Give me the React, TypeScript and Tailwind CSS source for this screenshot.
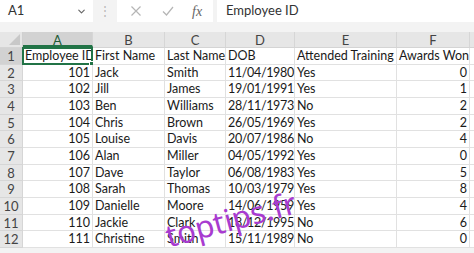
import { ChevronDown } from "lucide-react";

const cols = ["A", "B", "C", "D", "E", "F"];
const widths = ["w-[70px]", "w-[72px]", "w-[61px]", "w-[69px]", "w-[102px]", "w-[73px]"];

const rows: [string, string, string, string, string, string][] = [
  ["Employee ID", "First Name", "Last Name", "DOB", "Attended Training", "Awards Won"],
  ["101", "Jack", "Smith", "11/04/1980", "Yes", "0"],
  ["102", "Jill", "James", "19/01/1991", "Yes", "1"],
  ["103", "Ben", "Williams", "28/11/1973", "No", "2"],
  ["104", "Chris", "Brown", "26/05/1969", "Yes", "2"],
  ["105", "Louise", "Davis", "20/07/1986", "No", "4"],
  ["106", "Alan", "Miller", "04/05/1992", "Yes", "0"],
  ["107", "Dave", "Taylor", "06/08/1983", "Yes", "5"],
  ["108", "Sarah", "Thomas", "10/03/1979", "Yes", "8"],
  ["109", "Danielle", "Moore", "14/06/1959", "Yes", "4"],
  ["110", "Jackie", "Clark", "18/12/1995", "No", "6"],
  ["111", "Christine", "Smith", "15/11/1989", "No", "0"],
];

// numbers and dates sit on the right of their cell
const rightAligned = (r: number, c: number) => r > 0 && (c === 0 || c === 5 || c === 3);

export default function App() {
  return (
    <div
      className="relative h-[253px] w-[474px] overflow-hidden bg-[#f3f3f3] text-[12.5px] text-[#1a1a1a]"
      style={{ fontFamily: "Lato, 'Liberation Sans', sans-serif" }}
    >
      {/* formula bar */}
      <div className="flex h-[32px] items-start">
        <div className="flex h-[22px] w-[93px] items-center justify-between bg-white pl-[8px] pr-[6px] text-[13px] text-[#333]">
          <span>A1</span>
          <ChevronDown size={11} strokeWidth={2.5} className="text-[#666]" />
        </div>
        <div className="flex h-[22px] w-[24px] items-center justify-center text-[12px] text-[#b8b8b8]">⋮</div>
        <div className="flex h-[22px] w-[96px] items-center bg-white">
          <svg width="12" height="12" viewBox="0 0 12 12" className="ml-[13px]">
            <path d="M1.5 1.5 L10.5 10.5 M10.5 1.5 L1.5 10.5" stroke="#b5b5b5" strokeWidth="1.2" fill="none" />
          </svg>
          <svg width="12" height="12" viewBox="0 0 12 12" className="ml-[20px]">
            <path d="M1 6.5 L4.5 10 L11 2" stroke="#b5b5b5" strokeWidth="1.2" fill="none" />
          </svg>
          <span
            className="ml-[18px] text-[14px] italic text-[#666]"
            style={{ fontFamily: "'Liberation Serif', serif" }}
          >
            fx
          </span>
        </div>
        <div className="ml-[4px] flex h-[22px] flex-1 items-center bg-white pl-[9px] text-[13px] text-[#333]">
          Employee ID
        </div>
      </div>

      {/* column headers */}
      <div className="flex h-[16px] border-b border-[#d4d4d4] bg-[#e6e6e6] text-[13px] leading-[16px] text-[#444]">
        <div className="relative w-[23px] shrink-0 border-r border-[#d0d0d0]">
          <div className="absolute bottom-[2px] right-[2px] h-0 w-0 border-b-[11px] border-l-[11px] border-b-[#c8c8c8] border-l-transparent" />
        </div>
        {cols.map((c, i) => (
          <div
            key={c}
            className={`${widths[i]} shrink-0 border-r border-[#d6d6d6] text-center ${
              i === 0 ? "border-b-2 border-b-[#217346] bg-[#d2d2d2] text-[#1e5c36]" : ""
            }`}
          >
            {c}
          </div>
        ))}
        <div className="flex-1" />
      </div>

      {/* grid */}
      <div className="flex flex-col">
        {rows.map((row, r) => (
          <div key={r} className="flex h-[16.67px] leading-[16px]">
            <div
              className={`w-[23px] shrink-0 border-r border-b border-[#d6d6d6] text-center text-[13px] text-[#444] ${
                r === 0 ? "bg-[#d2d2d2] text-[#1e5c36]" : "bg-[#e6e6e6]"
              }`}
            >
              {r + 1}
            </div>
            {row.map((cell, c) => (
              <div
                key={c}
                className={`${widths[c]} relative shrink-0 whitespace-nowrap border-r border-b border-[#e1e1e1] bg-white px-[2px] ${
                  rightAligned(r, c) ? "text-right" : "text-left"
                } ${c === 3 && r > 0 ? "tracking-[-0.35px]" : ""}`}
              >
                {cell}
                {r === 0 && c === 0 && (
                  <div className="absolute -left-px -top-px h-[18px] w-[71px] border-2 border-[#217346]">
                    <div className="absolute -bottom-[3px] -right-[3px] h-[5px] w-[5px] border border-white bg-[#217346]" />
                  </div>
                )}
              </div>
            ))}
            <div className="flex-1 border-b border-[#e1e1e1] bg-white" />
          </div>
        ))}
      </div>

      {/* watermark */}
      <div
        className="absolute left-[166px] top-[221px] origin-left -rotate-[15deg] text-[31px] leading-none text-[#a83bd0]"
        style={{ fontFamily: "'Noto Sans', sans-serif" }}
      >
        toptips.fr
      </div>
    </div>
  );
}
